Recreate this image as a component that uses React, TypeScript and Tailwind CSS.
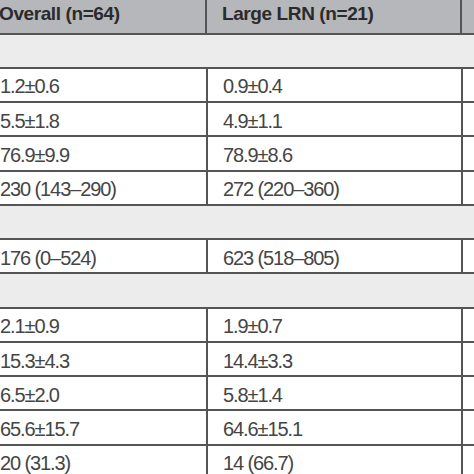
import React from 'react'

type Row =
  | { kind: 'section' }
  | { kind: 'data'; overall: string; large: string }

const rows: Row[] = [
  { kind: 'section' },
  { kind: 'data', overall: '1.2±0.6', large: '0.9±0.4' },
  { kind: 'data', overall: '5.5±1.8', large: '4.9±1.1' },
  { kind: 'data', overall: '76.9±9.9', large: '78.9±8.6' },
  { kind: 'data', overall: '230 (143–290)', large: '272 (220–360)' },
  { kind: 'section' },
  { kind: 'data', overall: '176 (0–524)', large: '623 (518–805)' },
  { kind: 'section' },
  { kind: 'data', overall: '2.1±0.9', large: '1.9±0.7' },
  { kind: 'data', overall: '15.3±4.3', large: '14.4±3.3' },
  { kind: 'data', overall: '6.5±2.0', large: '5.8±1.4' },
  { kind: 'data', overall: '65.6±15.7', large: '64.6±15.1' },
  { kind: 'data', overall: '20 (31.3)', large: '14 (66.7)' },
]

export default function App() {
  return (
    <div className="w-[474px] h-[474px] overflow-hidden bg-white font-['Liberation_Sans',Arial,sans-serif] text-[20px] tracking-[-1.1px]">
      {/* Header */}
      <div className="flex h-[34.5px] bg-[#b5b7ba] border-b-2 border-[#555]">
        <div className="w-[208px] shrink-0 border-r-2 border-[#555] -ml-[1px] pt-[1px] font-bold text-[19px] tracking-[-0.4px] text-[#2b2b2b] leading-[26px]">
          Overall (n=64)
        </div>
        <div className="w-[255px] shrink-0 border-r-2 border-[#555] pl-[15px] pt-[1px] font-bold text-[19px] tracking-[-0.4px] text-[#2b2b2b] leading-[26px]">
          Large LRN (n=21)
        </div>
        <div className="flex-1" />
      </div>

      {rows.map((row, i) =>
        row.kind === 'section' ? (
          <div key={i} className="h-[34.27px] bg-[#ececec] border-b-2 border-[#555]" />
        ) : (
          <div key={i} className="flex h-[34.27px] border-b-2 border-[#555] text-[#454545]">
            <div className="w-[208px] shrink-0 border-r-2 border-[#555] flex items-center pt-[3px]">
              {row.overall}
            </div>
            <div className="w-[255px] shrink-0 border-r-2 border-[#555] flex items-center pt-[3px] pl-[15px]">
              {row.large}
            </div>
            <div className="flex-1" />
          </div>
        )
      )}
    </div>
  )
}
